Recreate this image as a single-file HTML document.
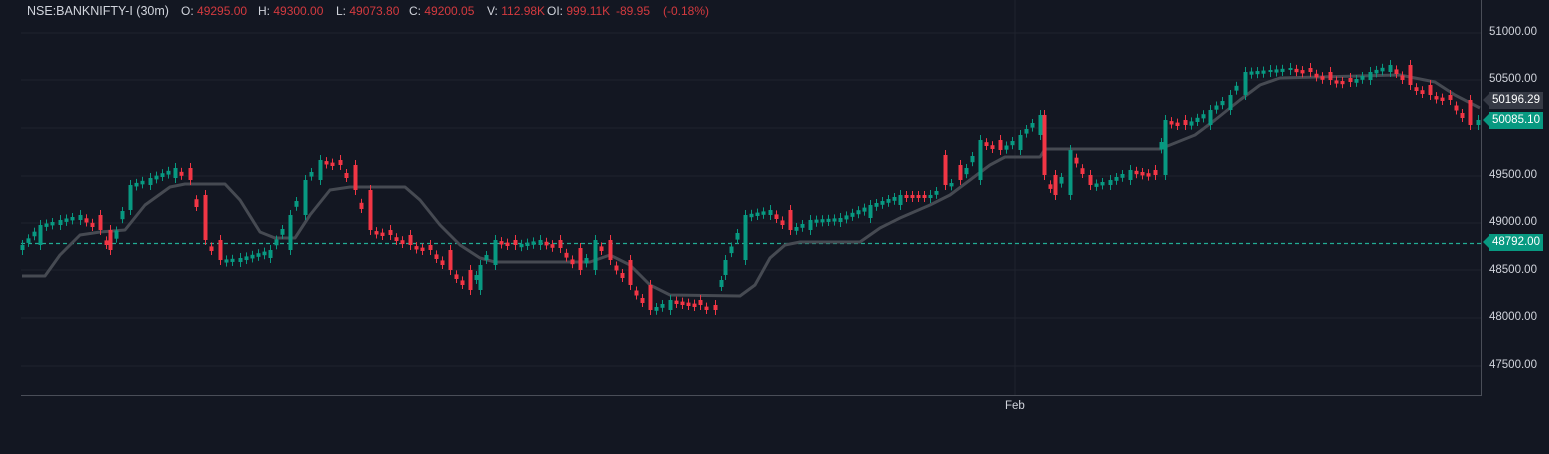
<!DOCTYPE html>
<html><head><meta charset="utf-8"><style>
html,body{margin:0;padding:0;background:#131722;width:1549px;height:454px;overflow:hidden;font-family:"Liberation Sans",sans-serif}
.hdr{position:absolute;top:4px;font-size:12px;color:#d1d4dc;white-space:nowrap}
.r{color:#d43a3f}
.ax{position:absolute;left:1489px;font-size:11.5px;color:#d1d4dc}
.tag{position:absolute;left:1489px;height:17px;line-height:17px;font-size:11.5px;padding:0 3px;color:#fff}
.tag:before{content:"";position:absolute;left:-6px;top:2px;border-right:6px solid;border-top:6.5px solid transparent;border-bottom:6.5px solid transparent;border-right-color:inherit}
</style></head><body>
<svg width="1549" height="454" style="position:absolute;left:0;top:0">
<g stroke="#1f232e" stroke-width="1">
<line x1="21" y1="33" x2="1481" y2="33"/><line x1="21" y1="80" x2="1481" y2="80"/><line x1="21" y1="128" x2="1481" y2="128"/><line x1="21" y1="176" x2="1481" y2="176"/><line x1="21" y1="223" x2="1481" y2="223"/><line x1="21" y1="270" x2="1481" y2="270"/><line x1="21" y1="318" x2="1481" y2="318"/><line x1="21" y1="366" x2="1481" y2="366"/>
<line x1="1015" y1="0" x2="1015" y2="395"/>
</g>
<line x1="1481.5" y1="0" x2="1481.5" y2="395" stroke="#4a4e58"/>
<line x1="21" y1="395.5" x2="1482" y2="395.5" stroke="#4a4e58"/>
<line x1="21" y1="243.5" x2="1481" y2="243.5" stroke="#22ab94" stroke-width="1.2" stroke-dasharray="4 3"/>
<polyline fill="none" stroke="#464a52" stroke-width="3" stroke-linejoin="round" points="22,276 45,276 60,255 80,235 100,232 125,230 145,205 170,187 185,184 225,184 240,200 260,232 275,238 295,238 310,215 330,190 350,187 405,187 420,200 440,225 460,245 480,258 495,262 590,262 610,255 630,265 650,285 670,295 740,296 755,285 770,258 785,245 800,242 860,242 880,228 900,218 930,205 950,195 970,180 990,165 1005,157 1040,157 1045,149 1160,149 1175,143 1195,135 1215,120 1240,100 1260,85 1280,78 1400,75 1435,82 1455,95 1480,108"/>
<g id="c"></g>
</svg>
<div class="hdr" style="left:27px;font-size:12.5px">NSE:BANKNIFTY-I (30m)</div>
<div class="hdr" style="left:181px">O: <span class="r">49295.00</span></div>
<div class="hdr" style="left:258px">H: <span class="r">49300.00</span></div>
<div class="hdr" style="left:336px">L: <span class="r">49073.80</span></div>
<div class="hdr" style="left:409px">C: <span class="r">49200.05</span></div>
<div class="hdr" style="left:487px">V: <span class="r">112.98K</span></div>
<div class="hdr" style="left:547px">OI: <span class="r">999.11K</span></div>
<div class="hdr r" style="left:616px">-89.95</div>
<div class="hdr r" style="left:663px">(-0.18%)</div>
<div class="ax" style="top:26px">51000.00</div>
<div class="ax" style="top:73px">50500.00</div>
<div class="ax" style="top:169px">49500.00</div>
<div class="ax" style="top:216px">49000.00</div>
<div class="ax" style="top:264px">48500.00</div>
<div class="ax" style="top:311px">48000.00</div>
<div class="ax" style="top:359px">47500.00</div>
<div class="ax" style="top:400px;left:1005px">Feb</div>
<div class="tag" style="top:92px;background:#363a45;border-color:#363a45">50196.29</div>
<div class="tag" style="top:112px;background:#089981;border-color:#089981">50085.10</div>
<div class="tag" style="top:234px;background:#089981;border-color:#089981">48792.00</div>
<script>
var d=[[22,250,245],[40,245,225],[60,225,220],[80,220,215],[100,215,230],[110,230,250],[130,210,185],[150,185,178],[175,178,168],[190,168,180],[205,195,240],[220,240,260],[240,262,258],[270,258,250],[290,250,215],[305,215,180],[320,180,160],[340,160,165],[355,165,190],[370,190,230],[390,230,235],[410,235,245],[430,245,250],[450,250,270],[470,270,290],[480,290,265],[495,265,240],[515,240,245],[540,245,240],[560,240,248],[580,248,270],[595,270,240],[610,240,260],[630,260,285],[650,285,310],[670,310,300],[700,300,305],[715,305,310],[725,275,260],[745,260,215],[770,215,210],[790,210,230],[810,230,220],[840,222,218],[870,218,205],[900,205,195],[930,198,195],[945,155,185],[960,165,180],[980,180,140],[1000,140,150],[1020,150,135],[1040,135,115],[1044,115,175],[1055,175,195],[1070,195,150],[1090,175,185],[1110,185,180],[1130,180,170],[1155,170,175],[1165,175,120],[1185,120,125],[1210,125,110],[1230,110,95],[1245,95,72],[1270,72,70],[1290,70,68],[1310,68,72],[1330,72,80],[1350,78,82],[1370,80,72],[1390,72,65],[1410,65,85],[1430,85,95],[1450,95,100],[1470,100,125],[1478,125,120]];
var s='';
for(var i=0;i<d.length;i++){var x=d[i][0],a=d[i][1],b=d[i][2],c=b<a?'#089981':'#f23645';var t=Math.min(a,b),h=Math.max(2,Math.abs(a-b));
s+='<rect x="'+x+'" y="'+(t-5)+'" width="1" height="'+(h+10)+'" fill="'+c+'"/><rect x="'+(x-1.5)+'" y="'+t+'" width="4" height="'+h+'" fill="'+c+'"/>';
if(i>0){var px=d[i-1][0],pb=d[i-1][2];for(var k=px+6;k<x-3;k+=6){var f=(k-px)/(x-px),y0=pb+(b-pb)*(f-0.08),y1=pb+(b-pb)*f;var cc=y1<y0?'#089981':'#f23645';var tt=Math.min(y0,y1),hh=Math.max(2,Math.abs(y1-y0)+3);s+='<rect x="'+k+'" y="'+(tt-4)+'" width="1" height="'+(hh+8)+'" fill="'+cc+'"/><rect x="'+(k-1.5)+'" y="'+tt+'" width="4" height="'+hh+'" fill="'+cc+'"/>';}}}
document.getElementById('c').innerHTML=s;
</script>
</body></html>
